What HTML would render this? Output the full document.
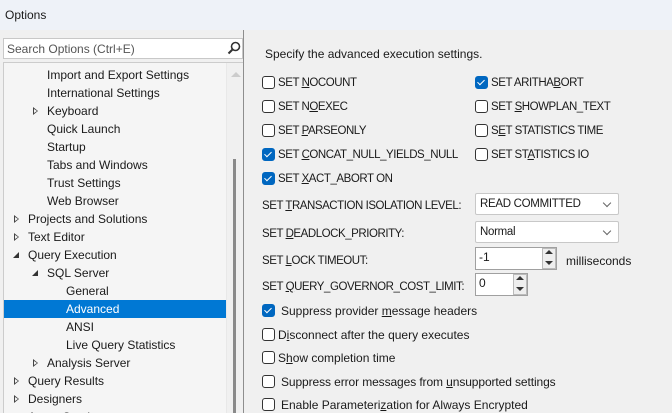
<!DOCTYPE html>
<html><head><style>
*{margin:0;padding:0;box-sizing:border-box}
html{width:672px;height:413px;overflow:hidden}
body{width:672px;height:413px;overflow:hidden;background:#f0f0f0;font-family:"Liberation Sans",sans-serif;font-size:12px;color:#1a1a1a;position:relative}
.a{position:absolute;white-space:nowrap}
.t{position:absolute;white-space:nowrap;line-height:18px;height:18px}
.cb{position:absolute;width:13px;height:13px;border:1px solid #333;border-radius:3px;background:#fff}
.cb.on{background:#0067c0;border-color:#0067c0}
.cb.on:after{content:"";position:absolute;left:3px;top:1px;width:3px;height:6px;border:solid #fff;border-width:0 1.3px 1.3px 0;transform:rotate(45deg)}
.lb{position:absolute;white-space:nowrap;line-height:14px;margin-top:1px}
.c{font-size:11.5px;letter-spacing:-0.45px}
.tri{position:absolute;width:0;height:0}
.closed{border-left:5px solid #444;border-top:4px solid transparent;border-bottom:4px solid transparent}
.closed:after{content:"";position:absolute;left:-4px;top:-2px;border-left:3px solid #f5f5f5;border-top:2px solid transparent;border-bottom:2px solid transparent}
.open{border-right:6px solid #333;border-top:6px solid transparent}
.dd{position:absolute;background:#fff;border:1px solid #c8c8c8;border-radius:2px;padding-left:4px;line-height:20px;font-size:11.5px;letter-spacing:-0.3px}
.dd:after{content:"";position:absolute;right:8px;top:6px;width:5px;height:5px;border:solid #666;border-width:0 1px 1px 0;transform:rotate(45deg)}
.sp{position:absolute;background:#fff;border:1px solid #a0a0a0;padding-left:3px;line-height:18px}
.sb{position:absolute;width:14px;border:1px solid #bbb;background:#eee}
</style></head><body>
<div class="a" style="left:0;top:0;width:672px;height:30px;background:#eef2f8"></div>
<div class="a" style="left:5px;top:8px;font-size:12px">Options</div>
<div class="a" style="left:3px;top:38px;width:240px;height:21px;background:#fff;border:1px solid #c8c8c8"></div>
<div class="a" style="left:7px;top:42px;color:#555">Search Options (Ctrl+E)</div>
<svg class="a" style="left:227px;top:41px" width="14" height="14"><circle cx="8.5" cy="5.5" r="4" fill="none" stroke="#333" stroke-width="1.6"/><line x1="5.5" y1="8.5" x2="1.5" y2="12.5" stroke="#333" stroke-width="2"/></svg>
<div class="a" style="left:3px;top:62px;width:241px;height:351px;background:#f5f5f5;border:1px solid #ccc;border-bottom:none;overflow:hidden">
<div class="a" style="left:0;top:237px;width:222px;height:18px;background:#0078d4"></div>
<div class="t" style="left:43px;top:3px">Import and Export Settings</div>
<div class="t" style="left:43px;top:21px">International Settings</div>
<div class="tri closed" style="left:29px;top:44px"></div><div class="t" style="left:43px;top:39px">Keyboard</div>
<div class="t" style="left:43px;top:57px">Quick Launch</div>
<div class="t" style="left:43px;top:75px">Startup</div>
<div class="t" style="left:43px;top:93px">Tabs and Windows</div>
<div class="t" style="left:43px;top:111px">Trust Settings</div>
<div class="t" style="left:43px;top:129px">Web Browser</div>
<div class="tri closed" style="left:10px;top:152px"></div><div class="t" style="left:24px;top:147px">Projects and Solutions</div>
<div class="tri closed" style="left:10px;top:170px"></div><div class="t" style="left:24px;top:165px">Text Editor</div>
<div class="tri open" style="left:9px;top:189px"></div><div class="t" style="left:24px;top:183px">Query Execution</div>
<div class="tri open" style="left:28px;top:207px"></div><div class="t" style="left:43px;top:201px">SQL Server</div>
<div class="t" style="left:62px;top:219px">General</div>
<div class="t" style="left:62px;top:237px;color:#fff">Advanced</div>
<div class="t" style="left:62px;top:255px">ANSI</div>
<div class="t" style="left:62px;top:273px">Live Query Statistics</div>
<div class="tri closed" style="left:29px;top:296px"></div><div class="t" style="left:43px;top:291px">Analysis Server</div>
<div class="tri closed" style="left:10px;top:314px"></div><div class="t" style="left:24px;top:309px">Query Results</div>
<div class="tri closed" style="left:10px;top:332px"></div><div class="t" style="left:24px;top:327px">Designers</div>
<div class="t" style="left:24px;top:345px">Azure Services</div>
<div class="a" style="left:222px;top:0;width:17px;height:351px;background:#f0f0f0;border-left:1px solid #e8e8e8"></div>
<div class="a" style="left:227px;top:9px;border-left:5px solid transparent;border-right:5px solid transparent;border-bottom:5px solid #ccc"></div>
<div class="a" style="left:229px;top:96px;width:3px;height:255px;background:#8a8a8a"></div>
</div>
<div class="a" style="left:243px;top:30px;width:1px;height:383px;background:#8e8e8e"></div>

<div class="a" style="left:265px;top:47px">Specify the advanced execution settings.</div>
<div class="cb" style="left:262px;top:76px"></div><div class="lb c" style="left:278px;top:75px">SET <u>N</u>OCOUNT</div>
<div class="cb" style="left:262px;top:100px"></div><div class="lb c" style="left:278px;top:99px">SET N<u>O</u>EXEC</div>
<div class="cb" style="left:262px;top:124px"></div><div class="lb c" style="left:278px;top:123px">SET <u>P</u>ARSEONLY</div>
<div class="cb on" style="left:262px;top:148px"></div><div class="lb c" style="left:278px;top:147px">SET <u>C</u>ONCAT_NULL_YIELDS_NULL</div>
<div class="cb on" style="left:262px;top:172px"></div><div class="lb c" style="left:278px;top:171px">SET <u>X</u>ACT_ABORT ON</div>
<div class="cb on" style="left:475px;top:76px"></div><div class="lb c" style="left:491px;top:75px">SET ARITHA<u>B</u>ORT</div>
<div class="cb" style="left:475px;top:100px"></div><div class="lb c" style="left:491px;top:99px">SET <u>S</u>HOWPLAN_TEXT</div>
<div class="cb" style="left:475px;top:124px"></div><div class="lb c" style="left:491px;top:123px">S<u>E</u>T STATISTICS TIME</div>
<div class="cb" style="left:475px;top:148px"></div><div class="lb c" style="left:491px;top:147px">SET ST<u>A</u>TISTICS IO</div>

<div class="lb c" style="left:262px;top:198px">SET <u>T</u>RANSACTION ISOLATION LEVEL:</div>
<div class="dd" style="left:475px;top:193px;width:144px;height:22px">READ COMMITTED</div>
<div class="lb c" style="left:262px;top:226px">SET <u>D</u>EADLOCK_PRIORITY:</div>
<div class="dd" style="left:475px;top:221px;width:144px;height:22px">Normal</div>
<div class="lb c" style="left:262px;top:253px">SET <u>L</u>OCK TIMEOUT:</div>
<div class="sp" style="left:475px;top:247px;width:82px;height:23px">-1</div>
<div class="sb" style="left:542px;top:248px;height:21px"></div>
<div class="a" style="left:545px;top:250px;border-left:4px solid transparent;border-right:4px solid transparent;border-bottom:4px solid #333"></div>
<div class="a" style="left:545px;top:261px;border-left:4px solid transparent;border-right:4px solid transparent;border-top:4px solid #333"></div>
<div class="a" style="left:566px;top:254px">milliseconds</div>
<div class="lb c" style="left:262px;top:279px">SET <u>Q</u>UERY_GOVERNOR_COST_LIMIT:</div>
<div class="sp" style="left:475px;top:273px;width:53px;height:23px">0</div>
<div class="sb" style="left:513px;top:274px;height:21px"></div>
<div class="a" style="left:516px;top:276px;border-left:4px solid transparent;border-right:4px solid transparent;border-bottom:4px solid #333"></div>
<div class="a" style="left:516px;top:287px;border-left:4px solid transparent;border-right:4px solid transparent;border-top:4px solid #333"></div>

<div class="cb on" style="left:262px;top:304px"></div><div class="lb" style="left:281px;top:303px">Suppress provider <u>m</u>essage headers</div>
<div class="cb" style="left:262px;top:328px"></div><div class="lb" style="left:278px;top:327px">D<u>i</u>sconnect after the query executes</div>
<div class="cb" style="left:262px;top:351px"></div><div class="lb" style="left:278px;top:350px">S<u>h</u>ow completion time</div>
<div class="cb" style="left:262px;top:375px"></div><div class="lb" style="left:281px;top:374px;letter-spacing:-0.1px">Suppress error messages from <u>u</u>nsupported settings</div>
<div class="cb" style="left:262px;top:398px"></div><div class="lb" style="left:281px;top:397px">Enable Parameteri<u>z</u>ation for Always Encrypted</div>
</body></html>
